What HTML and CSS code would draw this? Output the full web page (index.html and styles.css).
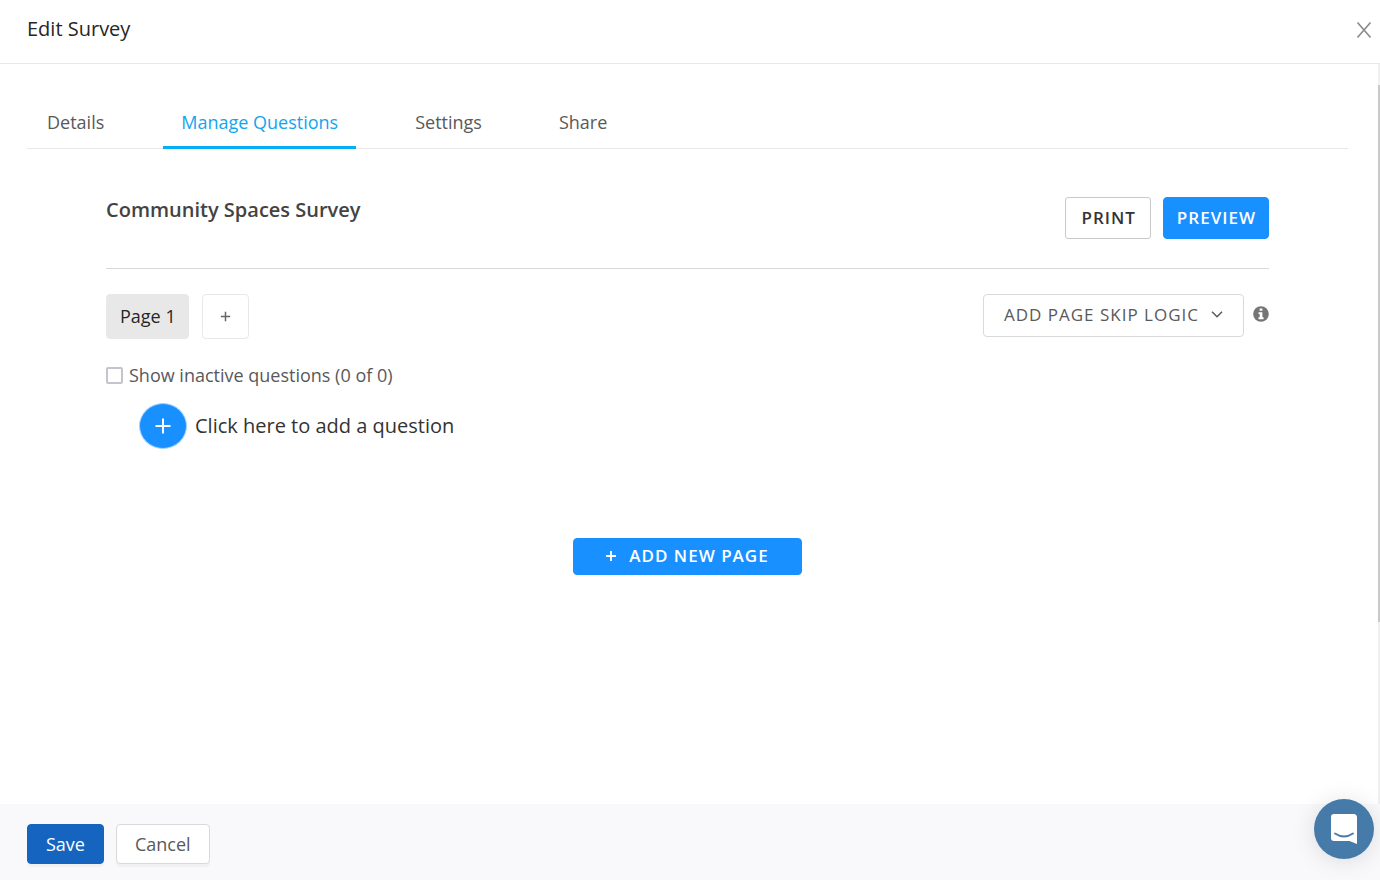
FILE: index.html
```html
<!DOCTYPE html>
<html lang="en">
<head>
<meta charset="utf-8">
<meta name="viewport" content="width=device-width, initial-scale=1">
<title>Edit Survey</title>
<link rel="stylesheet" href="styles.css">
</head>
<body>
<div class="drawer">
  <header class="drawer-header">
    <h1 class="drawer-title">Edit Survey</h1>
    <button class="close" type="button" aria-label="Close">
      <svg width="16" height="18" viewBox="0 0 16 18" fill="none" stroke="currentColor" stroke-width="1.7"><path d="M1.5 1.5 14.5 16.5M14.5 1.5 1.5 16.5"/></svg>
    </button>
  </header>

  <div class="drawer-body">
    <main class="panel">
      <nav class="tabs" aria-label="Survey sections">
        <a class="tab" href="#details">Details</a>
        <a class="tab tab-active" href="#questions" aria-current="page">Manage Questions</a>
        <a class="tab" href="#settings">Settings</a>
        <a class="tab" href="#share">Share</a>
      </nav>

      <section class="content">
        <div class="survey-head">
          <h2 class="survey-name">Community Spaces Survey</h2>
          <div class="survey-actions">
            <button class="btn btn-print" type="button">PRINT</button>
            <button class="btn btn-preview" type="button">PREVIEW</button>
          </div>
        </div>

        <div class="page-row">
          <div class="pages">
            <button class="page-btn page-current" type="button">Page 1</button>
            <button class="page-btn page-add" type="button" aria-label="Add page">
              <svg width="11" height="11" viewBox="0 0 11 11" fill="none" stroke="currentColor" stroke-width="1.5"><path d="M5.5 .8v9.400M.8 5.500h9.400"/></svg>
            </button>
          </div>
          <div class="logic">
            <button class="btn btn-logic" type="button" aria-haspopup="menu">ADD PAGE SKIP LOGIC
              <svg width="12" height="8" viewBox="0 0 12 8" fill="none" stroke="currentColor" stroke-width="1.5"><path d="M1 .7 6 5.700 11 .7"/></svg>
            </button>
            <svg class="info" width="16" height="16" viewBox="0 0 16 16"><circle cx="8" cy="8" r="7.8" fill="#757575"/><path fill="#fff" d="M6.6 2.400h2.800v2.300H6.600zM5.500 6.200h3.900v5.100h1.200v1.900H5.500v-1.900h1.200V8.100H5.500z"/></svg>
          </div>
        </div>

        <label class="inactive"><input class="check" type="checkbox">Show inactive questions (0 of 0)</label>

        <div class="add-question">
          <button class="round" type="button" id="add-q" aria-labelledby="add-q-label">
            <svg width="16" height="16" viewBox="0 0 16 16" fill="none" stroke="currentColor" stroke-width="2"><path d="M8 .5v15M.5 8h15"/></svg>
          </button>
          <label id="add-q-label" for="add-q">Click here to add a question</label>
        </div>

        <button class="btn btn-new-page" type="button">
          <svg width="10" height="10" viewBox="0 0 10 10" fill="none" stroke="currentColor" stroke-width="1.8"><path d="M5 0v10M0 5h10"/></svg>
          ADD NEW PAGE
        </button>
      </section>
    </main>
    <div class="rail"><div class="thumb"></div></div>
  </div>

  <footer class="drawer-footer">
    <button class="foot-btn save" type="button">Save</button>
    <button class="foot-btn cancel" type="button">Cancel</button>
  </footer>
</div>

<button class="chat" type="button" aria-label="Open chat">
  <svg width="28" height="32" viewBox="0 0 28 32"><path fill="#fff" d="M4 1h19.500a3.500 3.500 0 0 1 3.500 3.500V31l-7.500-3H4a3 3 0 0 1-3-3V4a3 3 0 0 1 3-3z"/><path d="M5 20.500q9 6 18 0" fill="none" stroke="#457aa9" stroke-width="1.800" stroke-linecap="round"/></svg>
</button>
</body>
</html>
```
FILE: styles.css
```css
* {
  box-sizing: border-box;
}

body {
  margin: 0;
  background: #fff;
  color: #595959;
  font-family: "Open Sans", "Noto Sans", sans-serif;
  font-size: 18px;
  line-height: 28px;
}

button {
  font: inherit;
  color: inherit;
  margin: 0;
  cursor: pointer;
}

svg {
  display: block;
  flex: none;
}

.drawer {
  display: flex;
  flex-direction: column;
  min-height: 100vh;
}

.drawer-header {
  display: flex;
  align-items: center;
  justify-content: space-between;
  padding: 15px 8px 20px 27px;
  border-bottom: 1px solid #e8e8e8;
}

.drawer-title {
  margin: 0;
  color: #262626;
  font-size: 20px;
  font-weight: 400;
  line-height: 28px;
}

.close {
  padding: 2px 0 0;
  border: 0;
  background: none;
  color: #8c8c8c;
}

.drawer-body {
  display: flex;
  flex: 1;
}

.panel {
  flex: 1;
  padding: 28px 30px 28px 27px;
}

.tabs {
  display: flex;
  gap: 41px;
  padding-left: 2px;
  border-bottom: 1px solid #e8e8e8;
}

.tab {
  margin-bottom: -1px;
  padding: 16px 18px 10px;
  border-bottom: 3px solid transparent;
  color: #595959;
  text-decoration: none;
}

.tab-active {
  border-bottom-color: #05adf4;
  color: #12a5ee;
}

.content {
  display: flex;
  flex-direction: column;
  align-items: stretch;
  padding: 48px 79px 0;
}

.survey-head {
  display: flex;
  justify-content: space-between;
  padding-bottom: 29px;
  border-bottom: 1px solid #d9d9d9;
}

.survey-name {
  margin: 0;
  color: #434343;
  font-size: 20px;
  font-weight: 600;
  line-height: 26px;
}

.survey-actions {
  display: flex;
  gap: 12px;
}

.btn {
  border: 1px solid #d9d9d9;
  border-radius: 4px;
  background: #fff;
  font-size: 17px;
  letter-spacing: 1px;
  white-space: nowrap;
}

.btn-print {
  padding: 6px 14px 6px 15px;
  border-color: #c9c9c9;
  border-radius: 3px;
  color: #333;
  font-weight: 600;
}

.btn-preview {
  padding: 6px 12px 6px 13px;
  border-color: #1890ff;
  background: #1890ff;
  color: #fff;
  font-weight: 600;
}

.page-row {
  display: flex;
  align-items: flex-start;
  justify-content: space-between;
  margin-top: 25px;
}

.pages {
  display: flex;
  gap: 13px;
}

.page-btn {
  display: flex;
  align-items: center;
  height: 45px;
  border: 1px solid #e8e8e8;
  border-radius: 4px;
}

.page-current {
  padding: 0 12px 2px 13px;
  background: #e8e8e8;
  color: #262626;
}

.page-add {
  padding: 0 17px;
  background: #fff;
  color: #666;
}

.logic {
  display: flex;
  align-items: flex-start;
  gap: 9px;
}

.btn-logic {
  display: flex;
  align-items: center;
  gap: 12px;
  padding: 6px 20px 7px;
}

.info {
  margin-top: 12px;
}

.inactive {
  display: flex;
  align-items: center;
  align-self: flex-start;
  gap: 6px;
  margin-top: 22px;
}

.check {
  appearance: none;
  width: 17px;
  height: 17px;
  margin: 0;
  border: 2px solid #c5c4cc;
  border-radius: 2px;
  background: #fff;
}

.check:checked {
  background: #1890ff;
}

.add-question {
  display: flex;
  align-items: center;
  gap: 8px;
  margin: 14px 0 0 33px;
  color: #333;
  font-size: 20px;
}

.round {
  display: grid;
  place-items: center;
  width: 48px;
  height: 46px;
  padding: 0;
  border: 1px solid #a3d3ff;
  border-radius: 50%;
  background: #1890ff;
  color: #fff;
}

.btn-new-page {
  display: flex;
  align-items: center;
  align-self: center;
  gap: 13px;
  margin-top: 89px;
  padding: 3px 32px 4px;
  border-color: #1890ff;
  background: #1890ff;
  color: #fff;
  font-weight: 600;
}

.rail {
  display: flex;
  flex-direction: column;
  width: 2px;
  background: #f0f0f0;
}

.thumb {
  height: 72.5%;
  margin-top: 21px;
  background: #c9c9c9;
}

.drawer-footer {
  display: flex;
  gap: 12px;
  padding: 20px 27px 16px;
  background: #f9f9fb;
}

.foot-btn {
  height: 40px;
  padding: 0 18px;
  border: 1px solid #d9d9d9;
  border-radius: 4px;
  background: #fff;
  box-shadow: 0 3px 0 rgba(0, 0, 0, 0.03);
}

.save {
  border-color: #1565c0;
  background: #1565c0;
  color: #fff;
}

.chat {
  position: fixed;
  right: 6px;
  bottom: 21px;
  display: grid;
  place-items: center;
  width: 60px;
  height: 60px;
  padding: 0;
  border: 0;
  border-radius: 50%;
  background: #457aa9;
  box-shadow: 0 2px 24px rgba(0, 0, 0, 0.12);
}
```
